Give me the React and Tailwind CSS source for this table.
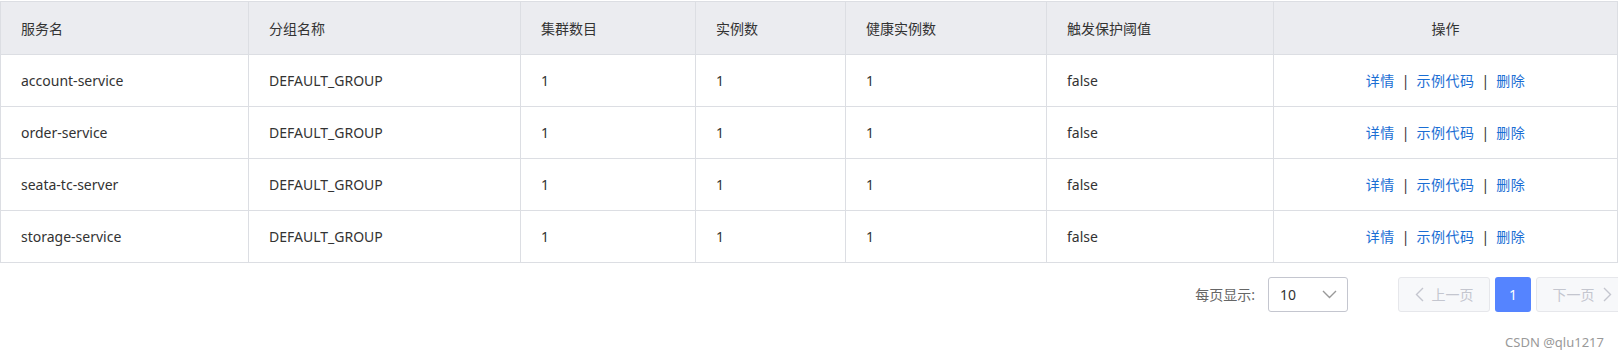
import React from "react";

const cols = [248, 272, 175, 150, 201, 227, 344];
const headers = ["服务名", "分组名称", "集群数目", "实例数", "健康实例数", "触发保护阈值", "操作"];
const rows = ["account-service", "order-service", "seata-tc-server", "storage-service"];

function Cell({ w, children, center }) {
  return (
    <div
      style={{ width: w }}
      className={`shrink-0 h-full flex items-center px-[20px] border-r border-[#dcdee3] ${center ? "justify-center" : ""}`}
    >
      {children}
    </div>
  );
}

function Ops() {
  return (
    <div className="flex items-center whitespace-nowrap">
      <span className="text-[#1a6ed4] tracking-[0.5px]">详情</span>
      <span className="mx-[7px] text-[#333]">|</span>
      <span className="text-[#1a6ed4] tracking-[0.5px]">示例代码</span>
      <span className="mx-[7px] text-[#333]">|</span>
      <span className="text-[#1a6ed4] tracking-[0.5px]">删除</span>
    </div>
  );
}

export default function App() {
  const font = { fontFamily: '"Noto Sans", "Noto Sans CJK SC", sans-serif' };
  return (
    <div className="w-[1618px] h-[360px] overflow-hidden bg-white text-[14px] text-[#333]" style={font}>
      <div className="pt-[1px]">
        <div className="border-l border-[#dcdee3]">
          <div className="flex h-[54px] bg-[#ebecf0] border-t border-b border-[#dcdee3]">
            {headers.map((h, i) => (
              <Cell key={h} w={cols[i]} center={i === 6}>
                {h}
              </Cell>
            ))}
          </div>
          {rows.map((r) => (
            <div key={r} className="flex h-[52px] border-b border-[#dcdee3]">
              <Cell w={cols[0]}>{r}</Cell>
              <Cell w={cols[1]}>DEFAULT_GROUP</Cell>
              <Cell w={cols[2]}>1</Cell>
              <Cell w={cols[3]}>1</Cell>
              <Cell w={cols[4]}>1</Cell>
              <Cell w={cols[5]}>false</Cell>
              <Cell w={cols[6]} center>
                <Ops />
              </Cell>
            </div>
          ))}
        </div>
      </div>

      <div className="w-[1628px] flex justify-end items-center mt-[14px] h-[35px]">
        <span className="text-[#666] mr-[13px] whitespace-nowrap">每页显示:</span>
        <div className="w-[80px] h-[35px] rounded-[3px] border border-[#c4c6cf] flex items-center justify-between pl-[11px] pr-[10px]">
          <span className="text-[#333]">10</span>
          <svg width="15" height="9" viewBox="0 0 15 9" fill="none">
            <path d="M1 1 L7.5 7.5 L14 1" stroke="#999" strokeWidth="1.4" />
          </svg>
        </div>
        <div className="w-[50px]" />
        <div className="w-[92px] h-[35px] rounded-[3px] border border-[#e6e7eb] bg-[#f7f8fa] flex items-center justify-center gap-[8px] text-[#c4c6cf] whitespace-nowrap">
          <svg width="9" height="15" viewBox="0 0 9 15" fill="none">
            <path d="M8 1 L1.5 7.5 L8 14" stroke="#c4c6cf" strokeWidth="1.4" />
          </svg>
          <span>上一页</span>
        </div>
        <div className="w-[36px] h-[35px] ml-[5px] rounded-[3px] bg-[#5584ff] text-white flex items-center justify-center">
          1
        </div>
        <div className="w-[92px] h-[35px] ml-[5px] rounded-[3px] border border-[#e6e7eb] bg-[#f7f8fa] flex items-center justify-center gap-[8px] text-[#c4c6cf] whitespace-nowrap">
          <span>下一页</span>
          <svg width="9" height="15" viewBox="0 0 9 15" fill="none">
            <path d="M1 1 L7.5 7.5 L1 14" stroke="#c4c6cf" strokeWidth="1.4" />
          </svg>
        </div>
      </div>

      <div className="flex justify-end pr-[14px] mt-[21px]">
        <span className="text-[13px] text-[#999] whitespace-nowrap">CSDN @qlu1217</span>
      </div>
    </div>
  );
}
